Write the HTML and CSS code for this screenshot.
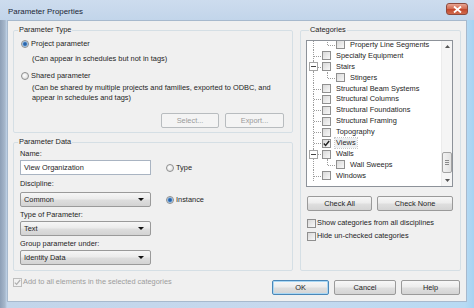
FILE: index.html
```html
<!DOCTYPE html>
<html>
<head>
<meta charset="utf-8">
<title>Parameter Properties</title>
<link rel="stylesheet" href="styles.css">
</head>
<body>
<div class="window">
  <div class="titlebar">
    <span class="title">Parameter Properties</span>
    <span class="close"><svg width="9" height="7" viewBox="0 0 9 7"><path d="M1 0.5 L8 6.5 M8 0.5 L1 6.5" stroke="#fff" stroke-width="1.8"/></svg></span>
  </div>
  <div class="client">
    <div class="main">
      <div class="left">
        <fieldset class="group ptype">
          <legend>Parameter Type</legend>
          <div class="radio-row r1"><span class="radio checked"></span><span>Project parameter</span></div>
          <div class="note n1">(Can appear in schedules but not in tags)</div>
          <div class="radio-row r2"><span class="radio"></span><span>Shared parameter</span></div>
          <div class="note n2">(Can be shared by multiple projects and families, exported to ODBC, and<br>appear in schedules and tags)</div>
          <div class="btn-row">
            <span class="btn disabled w58">Select...</span>
            <span class="btn disabled w59">Export...</span>
          </div>
        </fieldset>
        <fieldset class="group pdata">
          <legend>Parameter Data</legend>
          <div class="flabel l-name">Name:</div>
          <div class="field-row">
            <span class="input">View Organization</span>
            <span class="radio-inline"><span class="radio"></span><span>Type</span></span>
          </div>
          <div class="flabel">Discipline:</div>
          <div class="field-row fr-sel">
            <span class="select"><span>Common</span><span class="arrow"></span></span>
            <span class="radio-inline"><span class="radio checked"></span><span>Instance</span></span>
          </div>
          <div class="flabel">Type of Parameter:</div>
          <div class="field-row fr-sel2">
            <span class="select"><span>Text</span><span class="arrow"></span></span>
          </div>
          <div class="flabel">Group parameter under:</div>
          <div class="field-row fr-sel2">
            <span class="select"><span>Identity Data</span><span class="arrow"></span></span>
          </div>
        </fieldset>
      </div>
      <fieldset class="group cats">
        <legend>Categories</legend>
        <div class="listbox">
          <div class="tree">
            <div class="tree-inner">
              <div class="trow"><span class="cell v"></span><span class="cell l"></span><span class="cb"></span><span class="tlabel">Property Line Segments</span></div>
              <div class="trow"><span class="cell t"></span><span class="cb"></span><span class="tlabel">Specialty Equipment</span></div>
              <div class="trow"><span class="cell t"><span class="exp"></span></span><span class="cb"></span><span class="tlabel">Stairs</span></div>
              <div class="trow"><span class="cell v"></span><span class="cell l"></span><span class="cb"></span><span class="tlabel">Stingers</span></div>
              <div class="trow"><span class="cell t"></span><span class="cb"></span><span class="tlabel">Structural Beam Systems</span></div>
              <div class="trow"><span class="cell t"></span><span class="cb"></span><span class="tlabel">Structural Columns</span></div>
              <div class="trow"><span class="cell t"></span><span class="cb"></span><span class="tlabel">Structural Foundations</span></div>
              <div class="trow"><span class="cell t"></span><span class="cb"></span><span class="tlabel">Structural Framing</span></div>
              <div class="trow"><span class="cell t"></span><span class="cb"></span><span class="tlabel">Topography</span></div>
              <div class="trow"><span class="cell t"></span><span class="cb checked"><svg width="7" height="7" viewBox="0 0 7 7"><path d="M0.8 3.6 L2.6 5.4 L6.2 1" fill="none" stroke="#222" stroke-width="1.4"/></svg></span><span class="tlabel sel">Views</span></div>
              <div class="trow"><span class="cell t"><span class="exp"></span></span><span class="cb"></span><span class="tlabel">Walls</span></div>
              <div class="trow"><span class="cell v"></span><span class="cell l"></span><span class="cb"></span><span class="tlabel">Wall Sweeps</span></div>
              <div class="trow"><span class="cell t"></span><span class="cb"></span><span class="tlabel">Windows</span></div>
            </div>
          </div>
          <div class="vscroll">
            <div class="sarrow"><svg width="5" height="3" viewBox="0 0 5 3"><path d="M0 3 L2.5 0 L5 3Z" fill="#555"/></svg></div>
            <div class="strack"><div class="thumb"><span></span><span></span><span></span></div></div>
            <div class="sarrow"><svg width="5" height="3" viewBox="0 0 5 3"><path d="M0 0 L2.5 3 L5 0Z" fill="#555"/></svg></div>
          </div>
        </div>
        <div class="btn-row2">
          <span class="btn w66">Check All</span>
          <span class="btn w77">Check None</span>
        </div>
        <div class="check-row c1"><span class="cb"></span><span>Show categories from all disciplines</span></div>
        <div class="check-row c2"><span class="cb"></span><span>Hide un-checked categories</span></div>
      </fieldset>
    </div>
    <div class="bottom">
      <div class="check-row disabled-text add-row"><span class="cb dis"><svg width="7" height="7" viewBox="0 0 7 7"><path d="M0.8 3.6 L2.6 5.4 L6.2 1" fill="none" stroke="#b0b0b0" stroke-width="1.2"/></svg></span><span>Add to all elements in the selected categories</span></div>
      <div class="dlg-buttons">
        <span class="btn default w57">OK</span>
        <span class="btn w62">Cancel</span>
        <span class="btn w59">Help</span>
      </div>
    </div>
  </div>
</div>
</body>
</html>
```

FILE: styles.css
```css
* { box-sizing: border-box; }
html, body { margin: 0; padding: 0; }
body {
  width: 474px;
  height: 308px;
  overflow: hidden;
  font-family: "Liberation Sans", Arial, sans-serif;
  font-size: 7.4px;
  color: #1e1e1e;
  background: #c4d7ec;
}
.window {
  width: 474px;
  height: 308px;
  display: flex;
  flex-direction: column;
  background: linear-gradient(to right, #8d9fb6 0px, #a7b8cc 5px, #c2d5ea 7px, #c6d9ee 60%, #b7daf3 98%, #a6d3f2 100%);
}
.titlebar {
  height: 20px;
  display: flex;
  align-items: center;
  justify-content: space-between;
  padding: 3px 6px 0 8px;
  background: linear-gradient(#cddcee, #c2d5ea);
}
.title {
  font-size: 7.9px;
  color: #1b2636;
}
.close {
  width: 22px;
  height: 12px;
  margin-top: -5px;
  border: 1px solid #8e4a3d;
  border-radius: 3px;
  background: linear-gradient(#e8a593, #d1674d 50%, #c2452a 51%, #d06a4c);
  display: flex;
  align-items: center;
  justify-content: center;
}
.client {
  margin: 0 7px 6px 7px;
  flex: 1;
  background: #f0f0f0;
  border: 1px solid #a7b9cd;
  padding: 4px 5px 0 5px;
  display: flex;
  flex-direction: column;
}
.main {
  display: flex;
  gap: 7px;
}
.left {
  width: 280px;
  display: flex;
  flex-direction: column;
}
.group {
  margin: 0;
  padding: 0;
  border: 1px solid #d5dfe5;
  border-radius: 2px;
  min-width: 0;
}
.group legend {
  padding: 0 1px;
  margin-left: 4px;
  line-height: 10px;
}
.ptype { padding: 4px 8px 4px 7px; }
.ptype legend { margin-left: -3px; }
.radio-row {
  display: flex;
  align-items: center;
  height: 10px;
  line-height: 10px;
}
.radio {
  width: 8px;
  height: 8px;
  border-radius: 50%;
  border: 1px solid #8e8f8f;
  background: radial-gradient(circle at 40% 40%, #ffffff, #d6d6d6);
  margin-right: 2px;
  flex: none;
}
.radio.checked {
  background: radial-gradient(circle, #1e4f8f 0, #3f7cc0 1.6px, #a9c8e8 2.6px, #eaeaea 3.4px);
}
.note { padding-left: 11px; line-height: 10px; }
.n1 { margin-top: 5px; }
.r2 { margin-top: 7px; }
.n2 { margin-top: 2px; line-height: 9.5px; }
.btn-row {
  display: flex;
  justify-content: flex-end;
  gap: 6px;
  margin-top: 11px;
}
.btn {
  height: 15px;
  border: 1px solid #9a9a9a;
  border-radius: 2px;
  background: linear-gradient(#f7f7f7, #ececec 48%, #dfdfdf 52%, #d4d4d4);
  display: flex;
  align-items: center;
  justify-content: center;
  color: #1e1e1e;
}
.btn.disabled {
  border-color: #b8bcbf;
  background: #f4f4f4;
  color: #9a9a9a;
}
.btn.default {
  border-color: #4a87b8;
  box-shadow: inset 0 0 0 1px #a9d7f4;
}
.w57 { width: 57px; }
.w58 { width: 58px; }
.w59 { width: 59px; }
.w62 { width: 62px; }
.w66 { width: 66px; }
.w77 { width: 77px; }

.pdata {
  margin-top: 4px;
  padding: 2px 6px 5px 6px;
}
.pdata legend { margin-left: -2px; }
.flabel { line-height: 10px; margin-top: 3px; }
.l-name { margin-top: 0; }
.field-row {
  display: flex;
  align-items: center;
  margin-top: 1px;
}
.field-row + .flabel { margin-top: 4px; }
.fr-sel { margin-top: 3px; }
.fr-sel + .flabel { margin-top: 3px; }
.fr-sel2 + .flabel { margin-top: 3px; }
.input {
  width: 131px;
  height: 15px;
  border: 1px solid #a9b4c2;
  background: #fff;
  padding-left: 3px;
  display: flex;
  align-items: center;
}
.select {
  width: 131px;
  height: 15px;
  border: 1px solid #9a9a9a;
  border-radius: 2px;
  background: linear-gradient(#f6f6f6, #ebebeb 48%, #dedede 52%, #d3d3d3);
  padding: 0 6px 0 3px;
  display: flex;
  align-items: center;
  justify-content: space-between;
}
.arrow {
  width: 0;
  height: 0;
  border-left: 3px solid transparent;
  border-right: 3px solid transparent;
  border-top: 3px solid #111;
}
.radio-inline {
  display: flex;
  align-items: center;
  margin-left: 15px;
  line-height: 10px;
}

.cats {
  flex: 1;
  padding: 5px 7px 0 5px;
}
.cats legend { margin-left: 3px; }
.listbox {
  height: 147px;
  border: 1px solid #8d9299;
  background: #fff;
  display: flex;
}
.tree {
  flex: 1;
  overflow: hidden;
}
.tree-inner { margin-top: -1.5px; }
.trow {
  height: 10.92px;
  display: flex;
  align-items: center;
}
.cell {
  width: 14px;
  align-self: stretch;
  position: relative;
  flex: none;
}
.cell::before {
  content: "";
  position: absolute;
  left: 6px;
  top: 0;
  bottom: 0;
  border-left: 1px dotted #9c9c9c;
}
.cell.l::before { bottom: 50%; }
.cell.t::after, .cell.l::after {
  content: "";
  position: absolute;
  left: 7px;
  right: 0;
  top: 50%;
  border-top: 1px dotted #9c9c9c;
}
.exp {
  position: absolute;
  left: 2px;
  top: 1px;
  width: 9px;
  height: 9px;
  border: 1px solid #a5a5a5;
  background: #fff;
  z-index: 1;
}
.exp::after {
  content: "";
  position: absolute;
  left: 1px;
  right: 1px;
  top: 3px;
  border-top: 1px solid #444;
}
.cb {
  width: 9px;
  height: 9px;
  border: 1px solid #8f8f8f;
  background: linear-gradient(135deg, #d9d9d9, #f8f8f8);
  margin-left: 1px;
  flex: none;
  display: flex;
  align-items: center;
  justify-content: center;
}
.tlabel { margin-left: 4px; padding: 0 1px; line-height: 10px; white-space: nowrap; }
.tlabel.sel { background: #eef0f2; outline: 1px dotted #c8c8c8; }
.vscroll {
  width: 11px;
  flex: none;
  display: flex;
  flex-direction: column;
  background: #f5f5f5;
  border-left: 1px solid #ececec;
}
.sarrow {
  height: 11px;
  display: flex;
  align-items: center;
  justify-content: center;
}
.strack { flex: 1; }
.thumb {
  margin-top: 100px;
  height: 21px;
  border: 1px solid #a3a3a3;
  border-radius: 2px;
  background: linear-gradient(to right, #f2f2f2, #e2e2e2);
  display: flex;
  flex-direction: column;
  align-items: center;
  justify-content: center;
  gap: 1px;
}
.thumb span {
  width: 4px;
  height: 1px;
  background: #8a8a8a;
}
.btn-row2 {
  display: flex;
  gap: 5px;
  margin-top: 9px;
  padding-left: 1px;
}
.check-row {
  display: flex;
  align-items: center;
  line-height: 10px;
  gap: 1px;
}
.c1 { margin-top: 7px; }
.c2 { margin-top: 3px; }
.bottom {
  display: flex;
  align-items: flex-start;
  justify-content: space-between;
  margin-top: 9px;
  padding-right: 1px;
}
.add-row { margin-top: -3px; }
.disabled-text { color: #9c9c9c; }
.cb.dis { border-color: #bdbdbd; background: #f2f2f2; margin-left: 0; }
.dlg-buttons {
  display: flex;
  gap: 5px;
}
```
